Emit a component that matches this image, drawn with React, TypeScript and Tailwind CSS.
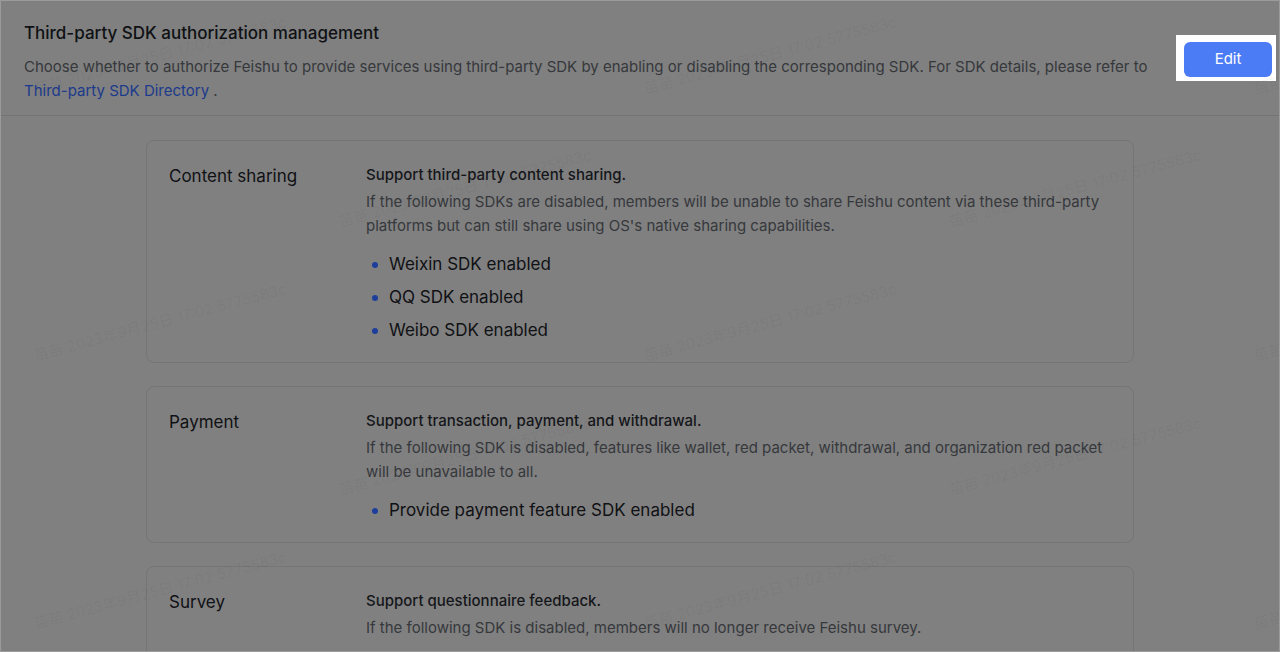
const marks: { x: number; y: number }[] = [
  { x: 35, y: 95 },
  { x: 645, y: 95 },
  { x: 1255, y: 95 },
  { x: -270, y: 228 },
  { x: 340, y: 228 },
  { x: 950, y: 228 },
  { x: 35, y: 362 },
  { x: 645, y: 362 },
  { x: 1255, y: 362 },
  { x: -270, y: 496 },
  { x: 340, y: 496 },
  { x: 950, y: 496 },
  { x: 35, y: 630 },
  { x: 645, y: 630 },
  { x: 1255, y: 630 },
];

type Section = {
  label: string;
  title: string;
  desc: string;
  items: string[];
};

const sections: Section[] = [
  {
    label: "Content sharing",
    title: "Support third-party content sharing.",
    desc: "If the following SDKs are disabled, members will be unable to share Feishu content via these third-party platforms but can still share using OS's native sharing capabilities.",
    items: ["Weixin SDK enabled", "QQ SDK enabled", "Weibo SDK enabled"],
  },
  {
    label: "Payment",
    title: "Support transaction, payment, and withdrawal.",
    desc: "If the following SDK is disabled, features like wallet, red packet, withdrawal, and organization red packet will be unavailable to all.",
    items: ["Provide payment feature SDK enabled"],
  },
  {
    label: "Survey",
    title: "Support questionnaire feedback.",
    desc: "If the following SDK is disabled, members will no longer receive Feishu survey.",
    items: ["Survey SDK enabled"],
  },
];

const Card = ({ s }: { s: Section }) => (
  <div className="flex rounded-lg border border-[#747577] pt-[23px] pb-[15px] pl-[22px] pr-6">
    <div className="w-[197px] shrink-0 text-[17px] leading-6 text-[#101114]">{s.label}</div>
    <div className="flex-1">
      <p className="text-[15px] leading-[22px] font-medium text-[#15161a]">{s.title}</p>
      <p className="mt-1 max-w-[740px] text-[15px] leading-6 text-[#36383c]">{s.desc}</p>
      <ul className="mt-[10px]">
        {s.items.map(i => (
          <li key={i} className="flex h-[33px] items-center text-[17px] text-[#101114]">
            <span className="ml-[6px] mr-[11px] h-[6px] w-[6px] rounded-full bg-[#1e3e9c]" />
            {i}
          </li>
        ))}
      </ul>
    </div>
  </div>
);

export default function App() {
  return (
    <div
      className="relative h-[652px] w-full overflow-hidden border border-[#9b9b9b] bg-[#808080]"
      style={{ fontFamily: "Inter, 'Noto Sans CJK SC', sans-serif" }}
    >
      {/* header */}
      <div className="flex border-b border-[#737476] pl-[23px] pb-[12px]">
        <div className="flex-1 pt-[20px]">
          <p className="text-[17px] leading-6 font-medium text-[#0f1114]">
            Third-party SDK authorization management
          </p>
          <p className="mt-[10px] max-w-[1130px] text-[15px] leading-6 text-[#36383c]">
            Choose whether to authorize Feishu to provide services using third-party SDK by enabling or disabling the
            corresponding SDK. For SDK details, please refer to{" "}
            <span className="text-[#1c3a8c]">Third-party SDK Directory</span> .
          </p>
        </div>
        <div className="ml-6 mr-[3px] mt-[34px] self-start bg-white pl-[8px] pr-[4px] pt-[7px] pb-[4px]">
          <button className="h-[35px] w-[88px] rounded-md bg-[#4b7bf5] text-[15px] text-white">Edit</button>
        </div>
      </div>

      {/* cards */}
      <div className="mx-auto mt-6 flex w-[988px] flex-col gap-[23px]">
        {sections.map(s => (
          <Card key={s.label} s={s} />
        ))}
      </div>

      {/* watermark */}
      {marks.map((m, i) => (
        <span
          key={i}
          className="pointer-events-none absolute origin-bottom-left -rotate-[15deg] whitespace-nowrap text-[15px] leading-none text-black/[0.05]"
          style={{ left: m.x, top: m.y - 15 }}
        >
          苗苗 2023年9月25日 17:02 5775583c
        </span>
      ))}
    </div>
  );
}
